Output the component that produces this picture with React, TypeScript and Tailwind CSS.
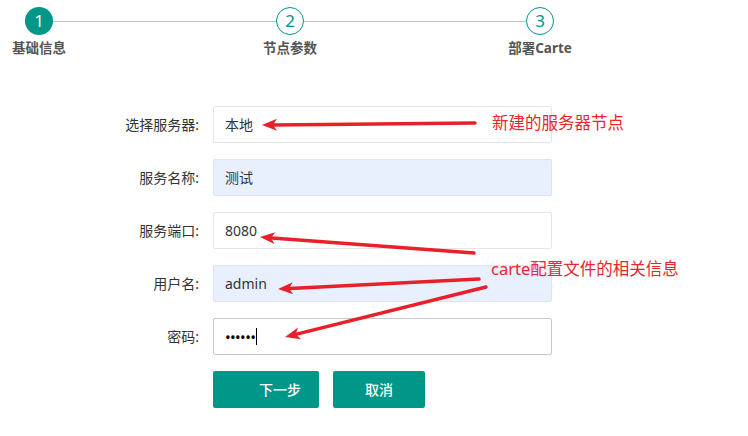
import React from "react";

const font = { fontFamily: '"Noto Sans", "Noto Sans CJK SC", sans-serif' };

type Arrow = { x1: number; y1: number; x2: number; y2: number };

// annotation arrows: start on the right, tip on the left
const arrows: Arrow[] = [
  { x1: 475, y1: 123, x2: 262, y2: 125 },
  { x1: 474, y1: 253, x2: 260, y2: 237 },
  { x1: 479, y1: 279, x2: 278, y2: 289 },
  { x1: 486, y1: 287, x2: 285, y2: 337 },
];

function ArrowShape({ a }: { a: Arrow }) {
  const ang = Math.atan2(a.y2 - a.y1, a.x2 - a.x1);
  const len = 15;
  const half = 6;
  const bx = a.x2 - Math.cos(ang) * len;
  const by = a.y2 - Math.sin(ang) * len;
  const px = -Math.sin(ang) * half;
  const py = Math.cos(ang) * half;
  return (
    <g>
      <line x1={a.x1} y1={a.y1} x2={bx + Math.cos(ang) * 3} y2={by + Math.sin(ang) * 3} stroke="#e8202a" strokeWidth={3.5} strokeLinecap="round" />
      <polygon points={`${a.x2},${a.y2} ${bx + px},${by + py} ${bx + Math.cos(ang) * 4},${by + Math.sin(ang) * 4} ${bx - px},${by - py}`} fill="#e8202a" />
    </g>
  );
}

function Step({ n, active }: { n: number; active?: boolean }) {
  return (
    <div
      className={`w-[28px] h-[28px] rounded-full flex items-center justify-center text-[17px] shrink-0 ${
        active ? "bg-[#009688] text-white" : "border border-[#009688] text-[#009688] bg-white"
      }`}
    >
      {n}
    </div>
  );
}

function Row({ label, children, bg, border }: { label: string; children: React.ReactNode; bg?: string; border?: string }) {
  return (
    <div className="flex items-center h-[37px]">
      <div className="w-[199px] text-right text-[14px] text-[#333]">{label}</div>
      <div
        className={`ml-[14px] w-[339px] h-[37px] rounded-[2px] border flex items-center pl-[11px] text-[14px] text-[#333] ${bg ?? "bg-white"} ${border ?? "border-[#e6e6e6]"}`}
      >
        {children}
      </div>
    </div>
  );
}

export default function App() {
  return (
    <div className="relative w-[748px] h-[436px] bg-white overflow-hidden" style={font}>
      {/* stepper */}
      <div className="pt-[7px]">
        <div className="flex items-center pl-[25px]">
          <Step n={1} active />
          <div className="w-[223px] h-px bg-[#c2c2c2]" />
          <Step n={2} />
          <div className="w-[222px] h-px bg-[#c2c2c2]" />
          <Step n={3} />
        </div>
        <div className="flex mt-[3px] text-[13.5px] font-bold text-[#555]">
          <div className="w-[78px] text-center">基础信息</div>
          <div className="w-[173px]" />
          <div className="w-[78px] text-center">节点参数</div>
          <div className="w-[172px]" />
          <div className="w-[78px] text-center">部署Carte</div>
        </div>
      </div>

      {/* form */}
      <div className="mt-[48px] flex flex-col gap-[16px]">
        <Row label="选择服务器:">本地</Row>
        <Row label="服务名称:" bg="bg-[#e8f0fe]" border="border-[#e0e4ea]">测试</Row>
        <Row label="服务端口:">8080</Row>
        <Row label="用户名:" bg="bg-[#e8f0fe]" border="border-[#e0e4ea]">admin</Row>
        <Row label="密码:" border="border-[#c9c9c9]">
          <span className="text-[15px] tracking-[-0.6px] text-black">••••••</span>
          <span className="ml-[1px] w-px h-[17px] bg-black" />
        </Row>
        <div className="flex ml-[213px] gap-[14px]">
          <button className="w-[106px] h-[37px] bg-[#009688] text-white text-[14px] font-medium rounded-[2px] pl-[28px]">
            下一步
          </button>
          <button className="w-[92px] h-[37px] bg-[#009688] text-white text-[14px] font-medium rounded-[2px]">
            取消
          </button>
        </div>
      </div>

      {/* annotations */}
      <div className="absolute left-[492px] top-[111px] text-[16.5px] text-[#e8262d]">新建的服务器节点</div>
      <div className="absolute left-[491px] top-[257px] text-[16.5px] text-[#e8262d]">carte配置文件的相关信息</div>
      <svg className="absolute left-0 top-0" width={748} height={436}>
        {arrows.map((a, i) => (
          <ArrowShape key={i} a={a} />
        ))}
      </svg>
    </div>
  );
}
